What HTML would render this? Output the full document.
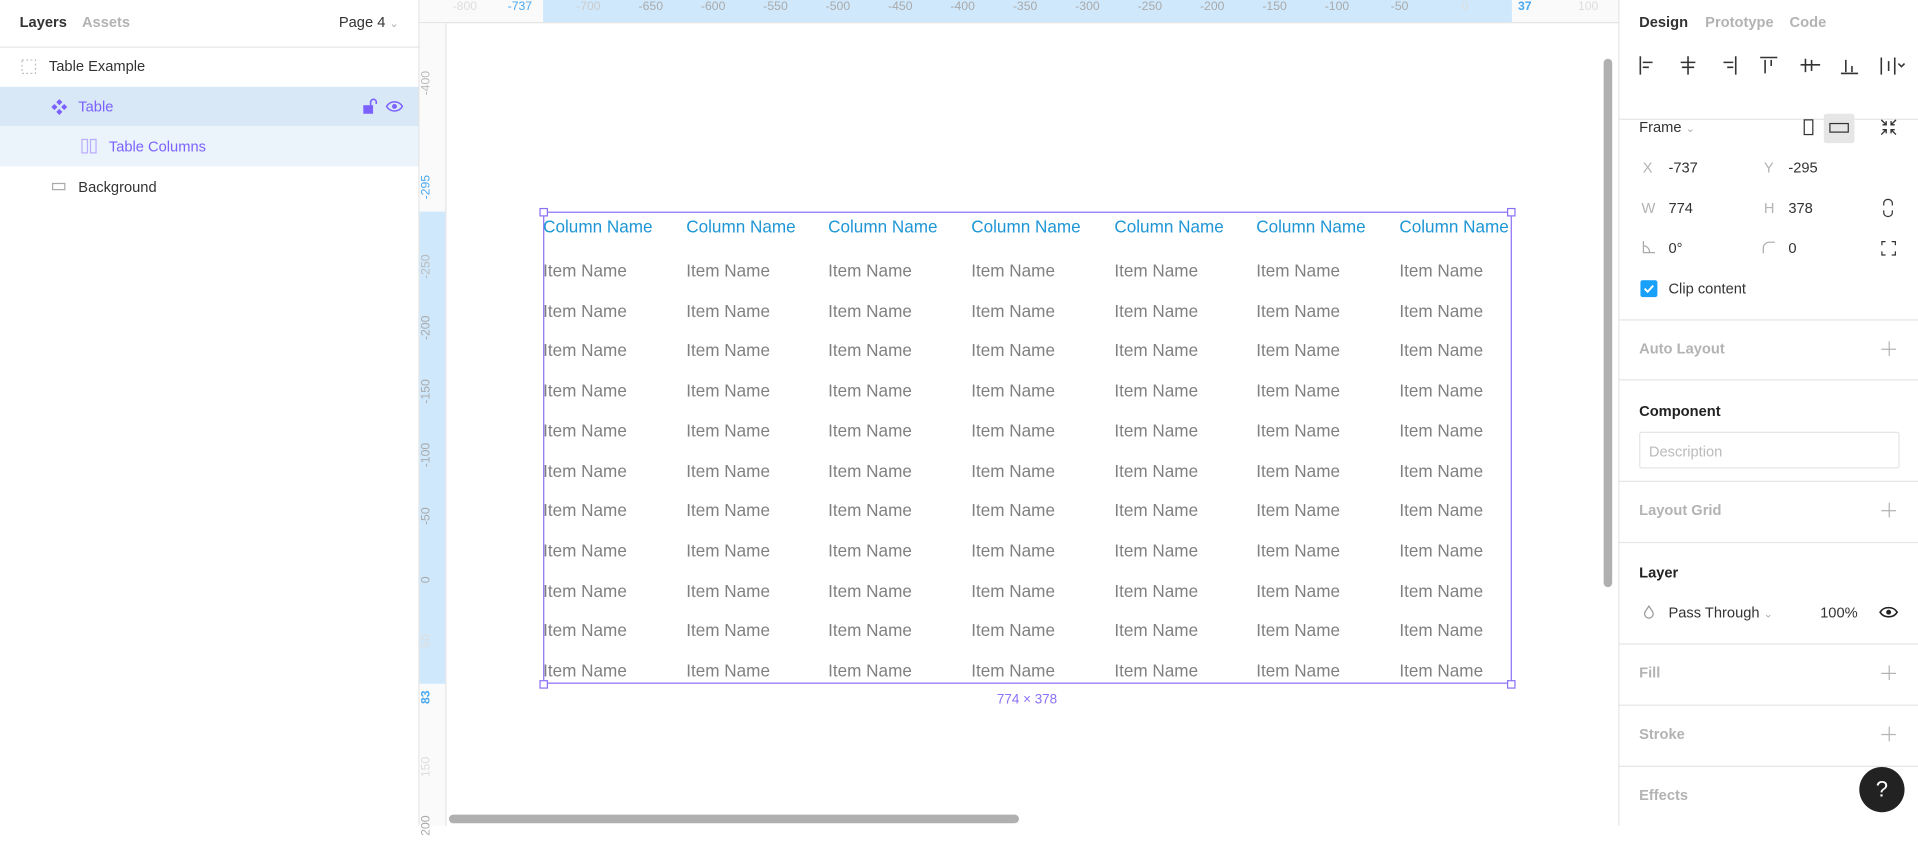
<!DOCTYPE html>
<html><head><meta charset="utf-8"><style>
*{box-sizing:border-box;margin:0;padding:0}
html,body{width:1918px;height:826px;overflow:hidden;background:#fff}
#w{position:absolute;left:0;top:0;width:1568px;height:675px;transform:scale(1.22321);transform-origin:0 0;font-family:"Liberation Sans",sans-serif;color:#333}
.a{position:absolute;white-space:nowrap}
.t{font-size:12px;line-height:16px}
.g{color:#b3b3b3}
.hr{position:absolute;height:1px;background:#e5e5e5}
.col{font-size:14px;color:#1e96d6;line-height:16px}
.it{font-size:14px;color:#808080;line-height:16px}
.rl{font-size:10px;color:#aaa;line-height:12px}
.vl{position:absolute;font-size:10px;color:#aaa;transform:rotate(-90deg);transform-origin:center;width:30px;text-align:center;line-height:12px}
.h{position:absolute;width:7px;height:7px;border:1px solid #8c70f5;background:#fff}
.sec{font-size:12px;color:#b3b3b3;font-weight:bold}
.plus{position:absolute;width:12px;height:12px}
.plus:before{content:"";position:absolute;left:5.5px;top:0;width:1px;height:12px;background:#b3b3b3}
.plus:after{content:"";position:absolute;top:5.5px;left:0;height:1px;width:12px;background:#b3b3b3}
</style></head><body><div id="w">

<!-- left panel -->
<div class="a t" style="left:16px;top:10px;font-weight:bold;color:#333">Layers</div>
<div class="a t g" style="left:67px;top:10px;font-weight:bold">Assets</div>
<div class="a t" style="left:277px;top:10px">Page 4 <span style="color:#aaa;font-size:9px">&#8964;</span></div>
<div class="hr" style="left:0;top:38px;width:343px"></div>
<svg class="a" style="left:17px;top:48px" width="14" height="14"><rect x="1" y="1" width="11" height="11" fill="none" stroke="#bbb" stroke-dasharray="1.5 2"/></svg>
<div class="a t" style="left:40px;top:46px">Table Example</div>
<div class="a" style="left:0;top:71px;width:343px;height:32px;background:#d9e8f6"></div>
<svg class="a" style="left:42px;top:81px" width="13" height="13" fill="#7b61ff"><path d="M6.5 0L9 2.5 6.5 5 4 2.5zM6.5 8L9 10.5 6.5 13 4 10.5zM2.5 4L5 6.5 2.5 9 0 6.5zM10.5 4L13 6.5 10.5 9 8 6.5z"/></svg>
<div class="a t" style="left:64px;top:79px;color:#7b61ff">Table</div>
<svg class="a" style="left:296px;top:80px" width="14" height="14"><rect x="1" y="6" width="8" height="7" fill="#7b61ff"/><path d="M7 6V3.5a2.3 2.3 0 0 1 4.6 0V5" fill="none" stroke="#7b61ff" stroke-width="1.3"/></svg>
<svg class="a" style="left:315px;top:81px" width="15" height="12"><path d="M1 6C4 1 11 1 14 6 11 11 4 11 1 6z" fill="none" stroke="#7b61ff" stroke-width="1.2"/><circle cx="7.5" cy="6" r="2" fill="#7b61ff"/></svg>
<div class="a" style="left:0;top:103px;width:343px;height:33px;background:#ebf3fb"></div>
<svg class="a" style="left:66px;top:113px" width="14" height="13"><rect x="1" y="1" width="4.5" height="11" fill="none" stroke="#b9adfd"/><rect x="8" y="1" width="4.5" height="11" fill="none" stroke="#b9adfd"/></svg>
<div class="a t" style="left:89px;top:112px;color:#7b61ff">Table Columns</div>
<svg class="a" style="left:42px;top:148px" width="13" height="10"><rect x="1" y="2" width="10" height="5" fill="none" stroke="#aaa"/></svg>
<div class="a t" style="left:64px;top:145px">Background</div>
<div class="a" style="left:342px;top:0;width:1px;height:675px;background:#e5e5e5"></div>

<!-- rulers -->
<div class="a" style="left:343px;top:0;width:980px;height:19px;background:#fafafa;border-bottom:1px solid #e5e5e5"></div>
<div class="a" style="left:444px;top:0;width:792px;height:18px;background:#cfe8fc"></div>
<div class="a" style="left:343px;top:19px;width:22px;height:656px;background:#fafafa;border-right:1px solid #e5e5e5"></div>
<div class="a" style="left:343px;top:173px;width:21px;height:386px;background:#cfe8fc"></div>
<div class="a rl" style="left:370px;top:0;color:#ddd">-800</div>
<div class="a rl" style="left:415px;top:0;color:#4aa8f0">-737</div>
<div class="a rl" style="left:471px;top:0;color:#ccc">-700</div>
<div class="a rl" style="left:522px;top:0">-650</div>
<div class="a rl" style="left:573px;top:0">-600</div>
<div class="a rl" style="left:624px;top:0">-550</div>
<div class="a rl" style="left:675px;top:0">-500</div>
<div class="a rl" style="left:726px;top:0">-450</div>
<div class="a rl" style="left:777px;top:0">-400</div>
<div class="a rl" style="left:828px;top:0">-350</div>
<div class="a rl" style="left:879px;top:0">-300</div>
<div class="a rl" style="left:930px;top:0">-250</div>
<div class="a rl" style="left:981px;top:0">-200</div>
<div class="a rl" style="left:1032px;top:0">-150</div>
<div class="a rl" style="left:1083px;top:0">-100</div>
<div class="a rl" style="left:1137px;top:0">-50</div>
<div class="a rl" style="left:1195px;top:0;color:#ddd">0</div>
<div class="a rl" style="left:1241px;top:0;color:#4aa8f0;font-weight:bold">37</div>
<div class="a rl" style="left:1290px;top:0;color:#ddd">100</div>
<div class="vl" style="left:334px;top:62px;color:#bbb">-400</div>
<div class="vl" style="left:334px;top:147px;color:#4aa8f0">-295</div>
<div class="vl" style="left:334px;top:212px;color:#bbb">-250</div>
<div class="vl" style="left:334px;top:262px">-200</div>
<div class="vl" style="left:334px;top:314px">-150</div>
<div class="vl" style="left:334px;top:366px">-100</div>
<div class="vl" style="left:334px;top:416px">-50</div>
<div class="vl" style="left:334px;top:468px">0</div>
<div class="vl" style="left:334px;top:518px;color:#ddd">50</div>
<div class="vl" style="left:334px;top:564px;color:#4aa8f0;font-weight:bold">83</div>
<div class="vl" style="left:334px;top:621px;color:#ddd">150</div>
<div class="vl" style="left:334px;top:669px">200</div>

<!-- frame -->
<div class="a" style="left:444px;top:173px;width:792px;height:386px;border:1px solid #8c70f5"></div>
<div class="h" style="left:441px;top:170px"></div>
<div class="h" style="left:1232px;top:170px"></div>
<div class="h" style="left:441px;top:556px"></div>
<div class="h" style="left:1232px;top:556px"></div>
<div class="a" style="left:815px;top:566px;font-size:11px;color:#8c70f5">774 × 378</div>
<div id="tb"></div>

<!-- scrollbars -->
<div class="a" style="left:1311px;top:48px;width:7px;height:432px;border-radius:4px;background:#b0b0b0"></div>
<div class="a" style="left:367px;top:666px;width:466px;height:7px;border-radius:4px;background:#b0b0b0"></div>

<!-- right panel -->
<div class="a" style="left:1323px;top:0;width:1px;height:675px;background:#e5e5e5"></div>
<div class="a t" style="left:1340px;top:10px;font-weight:bold">Design</div>
<div class="a t g" style="left:1394px;top:10px;font-weight:bold">Prototype</div>
<div class="a t g" style="left:1463px;top:10px;font-weight:bold">Code</div>
<svg class="a" style="left:1338px;top:44px" width="225" height="20" stroke="#333" stroke-width="1.3" fill="none">
<path d="M3 2v15M5 7h8M5 11h5"/>
<path d="M42 2v15M36 7h12M37 11h10"/>
<path d="M81 2v15M71 7h8M74 11h5"/>
<path d="M101 3h14M105 5v11M110 5v5" />
<path d="M134 9h16M138 4v11M143 5v9"/>
<path d="M167 16h14M171 5v10M176 10v5"/>
<path d="M200 3v14M206 6v8M211 3v14M214 8l2.5 2.5 2.5-2.5"/>
</svg>
<div class="hr" style="left:1323px;top:97px;width:245px"></div>
<div class="a t" style="left:1340px;top:96px;color:#333">Frame <span style="color:#aaa;font-size:9px">&#8964;</span></div>
<svg class="a" style="left:1473px;top:97px" width="12" height="15"><rect x="2" y="1" width="7" height="12" fill="none" stroke="#333"/></svg>
<div class="a" style="left:1491px;top:93px;width:25px;height:24px;background:#e6e6e6;border-radius:2px"></div>
<svg class="a" style="left:1495px;top:99px" width="18" height="12"><rect x="1" y="2" width="15" height="7" fill="none" stroke="#333"/></svg>
<svg class="a" style="left:1536px;top:96px" width="16" height="16" stroke="#333" fill="none" stroke-width="1.1"><path d="M2 2l4 4M6 3v3H3M14 2l-4 4M10 3v3h3M2 14l4-4M6 13v-3H3M14 14l-4-4M10 13v-3h3"/></svg>
<div class="a t g" style="left:1343px;top:129px">X</div><div class="a t" style="left:1364px;top:129px">-737</div>
<div class="a t g" style="left:1442px;top:129px">Y</div><div class="a t" style="left:1462px;top:129px">-295</div>
<div class="a t g" style="left:1342px;top:162px">W</div><div class="a t" style="left:1364px;top:162px">774</div>
<div class="a t g" style="left:1442px;top:162px">H</div><div class="a t" style="left:1462px;top:162px">378</div>
<svg class="a" style="left:1538px;top:162px" width="12" height="16" stroke="#333" fill="none"><path d="M2 6V4a3.5 3 0 0 1 7 0v2M2 10v2a3.5 3 0 0 0 7 0v-2"/></svg>
<svg class="a" style="left:1342px;top:196px" width="12" height="12" stroke="#aaa" fill="none"><path d="M1.5 1v9.5H11M1.5 5a5 5 0 0 1 5 5.5"/></svg>
<div class="a t" style="left:1364px;top:195px">0°</div>
<svg class="a" style="left:1440px;top:196px" width="12" height="12" stroke="#aaa" fill="none"><path d="M1.5 11V7a5 5 0 0 1 5-5H11"/></svg>
<div class="a t" style="left:1462px;top:195px">0</div>
<svg class="a" style="left:1537px;top:196px" width="14" height="14" stroke="#333" fill="none"><path d="M1.5 4.5v-3h3M9.5 1.5h3v3M12.5 9.5v3h-3M4.5 12.5h-3v-3"/></svg>
<svg class="a" style="left:1341px;top:229px" width="14" height="14"><rect width="14" height="14" rx="2" fill="#18a0fb"/><path d="M3.5 7l2.5 2.5 4.5-5" stroke="#fff" stroke-width="1.6" fill="none"/></svg>
<div class="a t" style="left:1364px;top:228px">Clip content</div>
<div class="hr" style="left:1323px;top:261px;width:245px"></div>
<div class="a sec" style="left:1340px;top:278px">Auto Layout</div><div class="plus" style="left:1538px;top:279px"></div>
<div class="hr" style="left:1323px;top:310px;width:245px"></div>
<div class="a t" style="left:1340px;top:328px;font-weight:bold;color:#222">Component</div>
<div class="a" style="left:1340px;top:353px;width:213px;height:30px;border:1px solid #e5e5e5;border-radius:2px"></div>
<div class="a t g" style="left:1348px;top:361px;color:#bbb">Description</div>
<div class="hr" style="left:1323px;top:393px;width:245px"></div>
<div class="a sec" style="left:1340px;top:410px">Layout Grid</div><div class="plus" style="left:1538px;top:411px"></div>
<div class="hr" style="left:1323px;top:443px;width:245px"></div>
<div class="a t" style="left:1340px;top:460px;font-weight:bold;color:#222">Layer</div>
<svg class="a" style="left:1342px;top:494px" width="12" height="13" stroke="#999" fill="none"><path d="M6 1.5L3 6a3.5 3.5 0 1 0 6 0z"/></svg>
<div class="a t" style="left:1364px;top:493px">Pass Through <span style="color:#aaa;font-size:9px">&#8964;</span></div>
<div class="a t" style="left:1488px;top:493px">100%</div>
<svg class="a" style="left:1536px;top:495px" width="16" height="11"><path d="M1 5.5C4 0.5 12 0.5 15 5.5 12 10.5 4 10.5 1 5.5z" fill="none" stroke="#222" stroke-width="1.3"/><circle cx="8" cy="5.5" r="2" fill="#222"/></svg>
<div class="hr" style="left:1323px;top:526px;width:245px"></div>
<div class="a sec" style="left:1340px;top:543px">Fill</div><div class="plus" style="left:1538px;top:544px"></div>
<div class="hr" style="left:1323px;top:576px;width:245px"></div>
<div class="a sec" style="left:1340px;top:593px">Stroke</div><div class="plus" style="left:1538px;top:594px"></div>
<div class="hr" style="left:1323px;top:626px;width:245px"></div>
<div class="a sec" style="left:1340px;top:643px">Effects</div>
<div class="a" style="left:1520px;top:627px;width:37px;height:37px;border-radius:50%;background:#222;color:#fff;font-size:18px;text-align:center;line-height:37px">?</div>
</div>
<script>
var h='',xs=[444,561,677,794,911,1027,1144];
xs.forEach(function(x){h+='<div class="a col" style="left:'+x+'px;top:177px">Column Name</div>';
for(var k=0;k<11;k++){h+='<div class="a it" style="left:'+x+'px;top:'+Math.round(213+32.7*k)+'px">Item Name</div>';}});
document.getElementById('tb').outerHTML=h;
</script>
</body></html>
